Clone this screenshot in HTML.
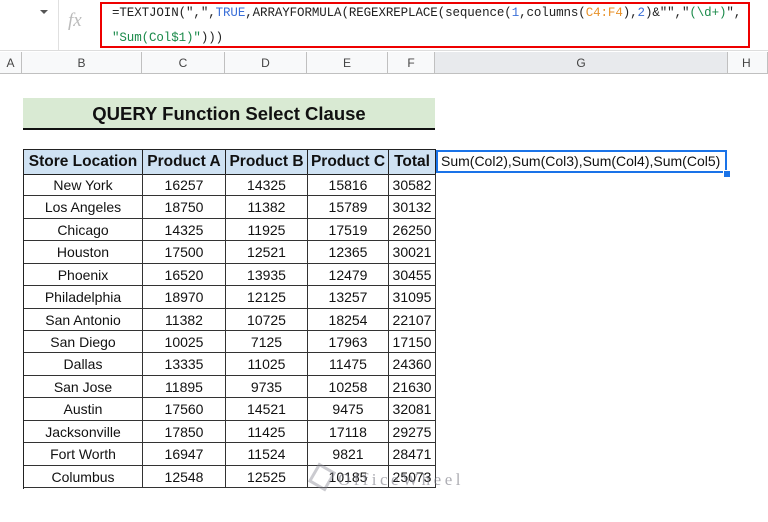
<!DOCTYPE html>
<html><head><style>
body{margin:0;width:768px;height:522px;background:#fff;position:relative;overflow:hidden;font-family:"Liberation Sans",Arial,sans-serif}
.a{position:absolute}
.fb{left:100px;top:2px;width:646px;height:42px;border:2px solid #e00;font-family:"Liberation Mono",monospace;font-size:12.5px;color:#222;letter-spacing:-0.1px}
.ch{top:52px;height:22px;background:#f8f9fa;border-bottom:1px solid #c0c0c0;border-right:1px solid #c0c0c0;font-size:12px;color:#444;text-align:center;line-height:22px;box-sizing:border-box}
.c{position:absolute;box-sizing:border-box;text-align:center;font-size:14px;color:#111;border-right:1px solid #333;border-bottom:1px solid #333}
.h{font-weight:bold;font-size:15.5px;background:#cfe2f3;border-bottom:1.5px solid #222;border-right:1.5px solid #222}
</style></head><body>
<div class="a" style="left:0;top:0;width:768px;height:50px;background:#fff;border-bottom:1px solid #ddd"></div>
<div class="a" style="left:40px;top:10px;width:0;height:0;border-left:4px solid transparent;border-right:4px solid transparent;border-top:4px solid #555"></div>
<div class="a" style="left:58px;top:0;width:1px;height:50px;background:#e0e0e0"></div>
<div class="a" style="left:68px;top:10px;font-family:'Liberation Serif',serif;font-style:italic;font-size:19px;color:#bbb">fx</div>
<div class="a fb"><div class="a" style="left:10px;top:2px">=TEXTJOIN(",",<span style="color:#3a6fd8">TRUE</span>,ARRAYFORMULA(REGEXREPLACE(sequence(<span style="color:#3a6fd8">1</span>,columns(<span style="color:#e8922a">C4:F4</span>),<span style="color:#3a6fd8">2</span>)&amp;"","<span style="color:#1a8a4a">(\d+)</span>",</div><div class="a" style="left:10px;top:27px"><span style="color:#1a8a4a">"Sum(Col$1)"</span>)))</div></div>
<div class="ch a" style="left:0;width:22px">A</div>
<div class="ch a" style="left:22px;width:120px">B</div>
<div class="ch a" style="left:142px;width:83px">C</div>
<div class="ch a" style="left:225px;width:82px">D</div>
<div class="ch a" style="left:307px;width:81px">E</div>
<div class="ch a" style="left:388px;width:47px">F</div>
<div class="ch a" style="left:435px;width:293px;background:#e8eaed">G</div>
<div class="ch a" style="left:728px;width:40px;text-align:left;padding-left:14px">H</div>
<div class="a" style="left:23px;top:98px;width:412px;height:30px;background:#d9ead3;border-bottom:2.5px solid #111;text-align:center;font-weight:bold;font-size:18.5px;line-height:31px;color:#111">QUERY Function Select Clause</div>
<div class="a" style="left:23px;top:149px;width:413px;height:340px;border-left:1.5px solid #222;border-top:1.5px solid #222;box-sizing:border-box"></div>
<div id="t"></div>
<div class="a" style="left:436px;top:150px;width:291px;height:23px;border:2px solid #1a73e8;box-sizing:border-box;font-size:14px;line-height:19px;padding-left:3px;color:#111">Sum(Col2),Sum(Col3),Sum(Col4),Sum(Col5)</div>
<div class="a" style="left:723px;top:170px;width:6px;height:6px;background:#1a73e8;border:1px solid #fff"></div>
<div class="a" style="left:312px;top:466px;width:20px;height:22px;border:3px solid rgba(140,140,150,0.45);transform:rotate(30deg);box-sizing:border-box"></div>
<div class="a" style="left:338px;top:470px;font-family:'Liberation Serif',serif;font-size:17px;letter-spacing:3.5px;color:rgba(120,120,130,0.6)">OfficeWheel</div>
<script>
var L=[24,143,226,308,389,436];
var rows=[["Store Location","Product A","Product B","Product C","Total"],
["New York",16257,14325,15816,30582],["Los Angeles",18750,11382,15789,30132],["Chicago",14325,11925,17519,26250],["Houston",17500,12521,12365,30021],["Phoenix",16520,13935,12479,30455],["Philadelphia",18970,12125,13257,31095],["San Antonio",11382,10725,18254,22107],["San Diego",10025,7125,17963,17150],["Dallas",13335,11025,11475,24360],["San Jose",11895,9735,10258,21630],["Austin",17560,14521,9475,32081],["Jacksonville",17850,11425,17118,29275],["Fort Worth",16947,11524,9821,28471],["Columbus",12548,12525,10185,25073]];
var h="";
rows.forEach(function(r,i){var top=i==0?150:174+(i-1)*22.43;var ht=i==0?24.5:22.43;
r.forEach(function(v,j){h+='<div class="c'+(i==0?' h':'')+'" style="left:'+L[j]+'px;top:'+top+'px;width:'+(L[j+1]-L[j])+'px;height:'+ht+'px;line-height:'+ht+'px">'+v+'</div>';});});
document.getElementById("t").innerHTML=h;
</script>
</body></html>
